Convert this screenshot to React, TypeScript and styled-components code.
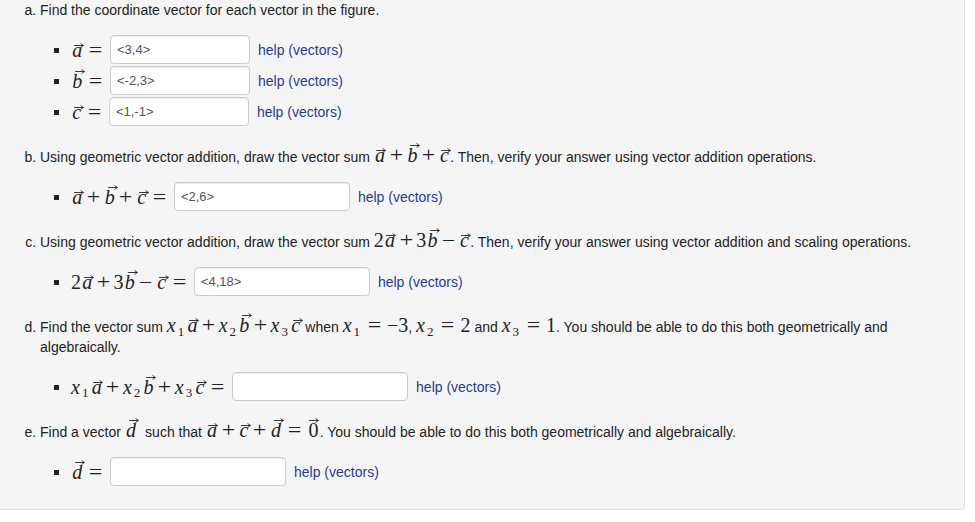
import React from 'react';
import styled, { createGlobalStyle } from 'styled-components';

const GlobalStyle = createGlobalStyle`
  html, body {
    margin: 0;
    padding: 0;
    background: #fff;
  }
  body {
    font-family: "Liberation Sans", Arial, sans-serif;
    font-size: 14px;
    color: #222;
  }
`;

const Panel = styled.div`
  box-sizing: border-box;
  width: 965px;
  background: #f5f5f5;
  border-right: 1px solid #dedede;
  border-bottom: 1px solid #dedede;
  border-bottom-right-radius: 4px;
  padding: 0 0 22px;
`;

const Parts = styled.ol`
  margin: 0;
  padding: 0 15px 0 40px;
  list-style: lower-alpha;
`;

const Part = styled.li`
  & + & {
    margin-top: 20px;
  }
`;

const Prompt = styled.div`
  line-height: 20px;
`;

const Answers = styled.ul`
  list-style: none;
  margin: 14px 0 0;
  padding: 0 0 0 14px;
`;

const Answer = styled.li`
  display: flex;
  align-items: center;
  height: 31px;

  &::before {
    content: "";
    flex: none;
    width: 5px;
    height: 5px;
    margin: 2px 12px 0 0;
    background: #222;
  }
`;

const Formula = styled.span`
  display: inline-block;
  font-family: "Liberation Serif", "DejaVu Serif", serif;
  font-size: 20px;
  line-height: 16px;
  color: #222;
  white-space: nowrap;
`;

const Var = styled.span`
  font-style: italic;
  padding-right: 2px;
`;

const Sub = styled.span`
  font-size: 13px;
  line-height: 0;
  vertical-align: -0.3em;
  margin-right: 2px;
`;

const VecBox = styled.span`
  position: relative;
  display: inline-block;
  padding: 0 1.25px;
  font-style: italic;
`;

const Upright = styled.span`
  font-style: normal;
`;

const Arrow = styled.svg<{ $top: number; $left: number }>`
  position: absolute;
  top: ${p => p.$top}px;
  left: ${p => p.$left}px;
  overflow: visible;
`;

const OpBox = styled.span<{ $rel?: boolean }>`
  display: inline-block;
  width: 14px;
  margin: 0 ${p => (p.$rel ? 5.5 : 3)}px;
  text-align: center;
  font-style: normal;
`;

const OpGlyph = styled.span`
  display: inline-block;
  transform: scaleX(1.2);
`;

const Blank = styled.input<{ $w: number }>`
  box-sizing: border-box;
  flex: none;
  width: ${p => p.$w}px;
  height: 29px;
  margin: 0 0 0 1.5px;
  padding: 0 6px;
  border: 1px solid #ccc;
  border-radius: 4px;
  background: #fff;
  font: 13px "Liberation Sans", Arial, sans-serif;
  color: #555;
  box-shadow: inset 0 1px 1px rgba(0, 0, 0, 0.075);
  outline: none;
`;

const Help = styled.a`
  margin-left: 8px;
  color: #1f3d8f;
  text-decoration: none;
  font-size: 14px;
`;

function Vec({ v, tall, digit }: { v: string; tall?: boolean; digit?: boolean }) {
  return (
    <VecBox>
      {digit ? <Upright>{v}</Upright> : v}
      <Arrow
        width="10"
        height="5"
        viewBox="0 0 10 5"
        $top={tall ? -4 : 1}
        $left={digit ? 1.5 : tall ? 4 : 2.5}
      >
        <path
          d="M0.5 2.5H9.2M6.9 0.7L9.3 2.5L6.9 4.3"
          fill="none"
          stroke="#222"
          strokeWidth="0.9"
          strokeLinecap="round"
          strokeLinejoin="round"
        />
      </Arrow>
    </VecBox>
  );
}

function Op({ s }: { s: string }) {
  return (
    <OpBox $rel={s === '='}>
      <OpGlyph>{s}</OpGlyph>
    </OpBox>
  );
}

function X({ i }: { i: number }) {
  return (
    <>
      <Var>x</Var>
      <Sub>{i}</Sub>
    </>
  );
}

function Row({ children, w, value }: { children: React.ReactNode; w: number; value?: string }) {
  return (
    <Answer>
      <Formula>
        {children}
        <Op s="=" />
      </Formula>
      <Blank $w={w} defaultValue={value ?? ''} />
      <Help href="#">help (vectors)</Help>
    </Answer>
  );
}

export default function App() {
  return (
    <>
      <GlobalStyle />
      <Panel>
        <Parts>
          <Part>
            <Prompt>Find the coordinate vector for each vector in the figure.</Prompt>
            <Answers>
              <Row w={140} value="<3,4>">
                <Vec v="a" />
              </Row>
              <Row w={140} value="<-2,3>">
                <Vec v="b" tall />
              </Row>
              <Row w={140} value="<1,-1>">
                <Vec v="c" />
              </Row>
            </Answers>
          </Part>

          <Part>
            <Prompt>
              Using geometric vector addition, draw the vector sum{' '}
              <Formula>
                <Vec v="a" />
                <Op s="+" />
                <Vec v="b" tall />
                <Op s="+" />
                <Vec v="c" />
              </Formula>
              . Then, verify your answer using vector addition operations.
            </Prompt>
            <Answers>
              <Row w={176} value="<2,6>">
                <Vec v="a" />
                <Op s="+" />
                <Vec v="b" tall />
                <Op s="+" />
                <Vec v="c" />
              </Row>
            </Answers>
          </Part>

          <Part>
            <Prompt>
              Using geometric vector addition, draw the vector sum{' '}
              <Formula>
                2<Vec v="a" />
                <Op s="+" />
                3<Vec v="b" tall />
                <Op s="−" />
                <Vec v="c" />
              </Formula>
              . Then, verify your answer using vector addition and scaling operations.
            </Prompt>
            <Answers>
              <Row w={176} value="<4,18>">
                2<Vec v="a" />
                <Op s="+" />
                3<Vec v="b" tall />
                <Op s="−" />
                <Vec v="c" />
              </Row>
            </Answers>
          </Part>

          <Part>
            <Prompt>
              Find the vector sum{' '}
              <Formula>
                <X i={1} />
                <Vec v="a" />
                <Op s="+" />
                <X i={2} />
                <Vec v="b" tall />
                <Op s="+" />
                <X i={3} />
                <Vec v="c" />
              </Formula>{' '}
              when{' '}
              <Formula>
                <X i={1} />
                <Op s="=" />
                −3
              </Formula>
              ,{' '}
              <Formula>
                <X i={2} />
                <Op s="=" />2
              </Formula>{' '}
              and{' '}
              <Formula>
                <X i={3} />
                <Op s="=" />1
              </Formula>
              . You should be able to do this both geometrically and
              <br />
              algebraically.
            </Prompt>
            <Answers>
              <Row w={176}>
                <X i={1} />
                <Vec v="a" />
                <Op s="+" />
                <X i={2} />
                <Vec v="b" tall />
                <Op s="+" />
                <X i={3} />
                <Vec v="c" />
              </Row>
            </Answers>
          </Part>

          <Part>
            <Prompt>
              Find a vector{' '}
              <Formula>
                <Vec v="d" tall />
              </Formula>
              {'\u00a0 '}such that{' '}
              <Formula>
                <Vec v="a" />
                <Op s="+" />
                <Vec v="c" />
                <Op s="+" />
                <Vec v="d" tall />
                <Op s="=" />
                <Vec v="0" tall digit />
              </Formula>
              . You should be able to do this both geometrically and algebraically.
            </Prompt>
            <Answers>
              <Row w={176}>
                <Vec v="d" tall />
              </Row>
            </Answers>
          </Part>
        </Parts>
      </Panel>
    </>
  );
}
